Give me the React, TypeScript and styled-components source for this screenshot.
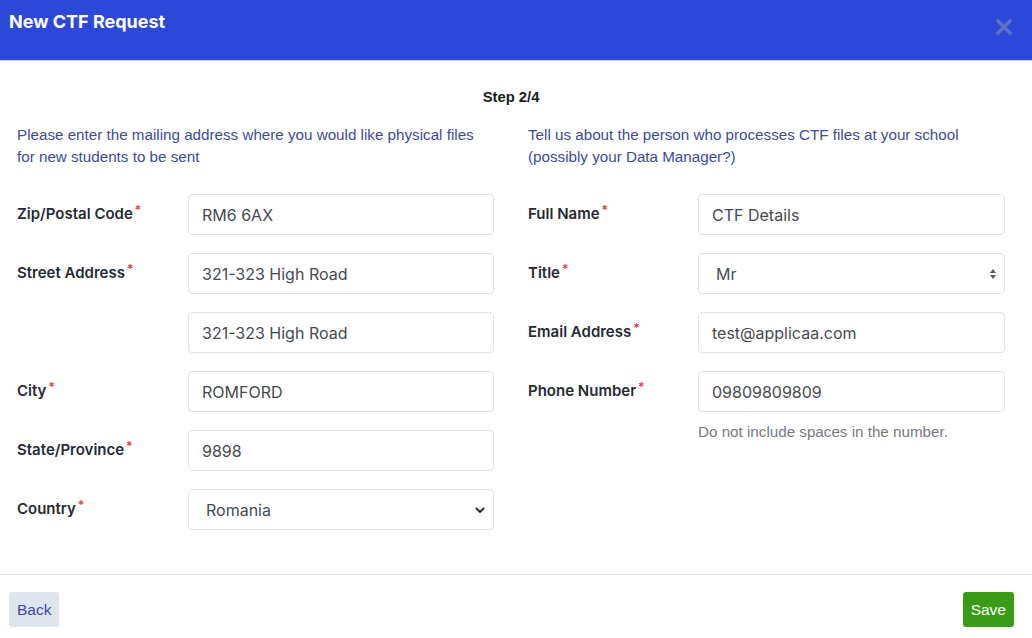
import React from 'react'
import styled, { createGlobalStyle } from 'styled-components'

const GlobalStyle = createGlobalStyle`
  html, body {
    margin: 0;
    padding: 0;
    background: #ffffff;
  }
  * {
    box-sizing: border-box;
  }
`

const Modal = styled.div`
  width: 1032px;
  height: 638px;
  display: flex;
  flex-direction: column;
  background: #fff;
  font-family: Inter, 'Liberation Sans', sans-serif;
`

const Header = styled.div`
  height: 61px;
  background: #2c48d8;
  border-bottom: 1px solid #c9d3ee;
  display: flex;
  align-items: flex-start;
  justify-content: space-between;
  padding: 11px 18px 0 9px;
`

const Title = styled.h1`
  margin: 0;
  color: #fff;
  font-size: 18px;
  font-weight: 700;
`

const CloseButton = styled.button`
  border: none;
  background: none;
  padding: 0;
  margin-top: 7px;
  width: 20px;
  height: 20px;
  cursor: pointer;
`

const Body = styled.div`
  flex: 1;
  padding: 28px 27px 0 17px;
`

const Step = styled.div`
  text-align: center;
  font-family: 'Liberation Sans', Arial, sans-serif;
  font-weight: 700;
  font-size: 14.8px;
  color: #1c1c1c;
  margin-bottom: 19px;
`

const Columns = styled.div`
  display: grid;
  grid-template-columns: 477px 477px;
  column-gap: 34px;
`

const Column = styled.div`
  display: flex;
  flex-direction: column;
`

const Intro = styled.p`
  margin: 0 0 26px;
  font-family: 'Liberation Sans', Arial, sans-serif;
  font-size: 15.2px;
  line-height: 22px;
  color: #3a4aa6;
`

const Row = styled.div<{ $labelWidth: number }>`
  display: grid;
  grid-template-columns: ${({ $labelWidth }) => $labelWidth}px 1fr;
  margin-bottom: 18px;
`

const Label = styled.label`
  font-size: 15px;
  font-weight: 600;
  color: #262a33;
  padding-top: 10px;
`

const Star = styled.span`
  color: #e8383d;
  font-size: 12px;
  vertical-align: top;
  margin-left: 2px;
  position: relative;
  top: -2px;
`

const Field = styled.div`
  display: flex;
  flex-direction: column;
  position: relative;
`

const Input = styled.input`
  width: 100%;
  height: 41px;
  border: 1px solid #dde3ea;
  border-radius: 4px;
  padding: 0 13px;
  font-family: Inter, 'Liberation Sans', sans-serif;
  font-size: 16px;
  color: #474a50;
  background: #fff;
  outline: none;
`

const Select = styled.select<{ $indent: number }>`
  width: 100%;
  height: 41px;
  border: 1px solid #dde3ea;
  border-radius: 4px;
  padding: 0 30px 0 ${({ $indent }) => $indent}px;
  font-family: Inter, 'Liberation Sans', sans-serif;
  font-size: 16px;
  color: #474a50;
  background: #fff;
  appearance: none;
  outline: none;
`

const Arrow = styled.span`
  position: absolute;
  right: 8px;
  top: 0;
  height: 41px;
  display: flex;
  align-items: center;
  pointer-events: none;
`

const Hint = styled.div`
  margin-top: 11px;
  font-family: 'Liberation Sans', Arial, sans-serif;
  font-size: 15.2px;
  color: #76797e;
`

const Footer = styled.div`
  height: 64px;
  border-top: 1px solid #dbe4ec;
  display: flex;
  justify-content: space-between;
  align-items: flex-start;
  padding: 17px 18px 0 9px;
`

const Button = styled.button<{ $variant: 'back' | 'save' }>`
  height: 35px;
  min-width: 50px;
  padding: 0 8px;
  border: none;
  border-radius: 3px;
  font-family: 'Liberation Sans', Arial, sans-serif;
  font-size: 15.5px;
  cursor: pointer;
  background: ${({ $variant }) => ($variant === 'save' ? '#3a9c16' : '#dfe5ee')};
  color: ${({ $variant }) => ($variant === 'save' ? '#ffffff' : '#3a4aa6')};
`

const Required = () => <Star>*</Star>

const ChevronDown = () => (
  <svg width="12" height="12" viewBox="0 0 12 12">
    <path d="M2.5 4.5 L6 8 L9.5 4.5" fill="none" stroke="#222" strokeWidth="1.8" strokeLinecap="round" strokeLinejoin="round" />
  </svg>
)

const UpDown = () => (
  <svg width="8" height="14" viewBox="0 0 8 14">
    <path d="M4 2 L7 6 L1 6 Z" fill="#555" />
    <path d="M4 12 L7 8 L1 8 Z" fill="#555" />
  </svg>
)

const leftRows = [
  { label: 'Zip/Postal Code', value: 'RM6 6AX', required: true },
  { label: 'Street Address', value: '321-323 High Road', required: true },
  { label: '', value: '321-323 High Road', required: false },
  { label: 'City', value: 'ROMFORD', required: true },
  { label: 'State/Province', value: '9898', required: true },
]

export default function App() {
  return (
    <Modal>
      <GlobalStyle />
      <Header>
        <Title>New CTF Request</Title>
        <CloseButton aria-label="Close">
          <svg width="18" height="18" viewBox="0 0 18 18">
            <path d="M3 3 L15 15 M15 3 L3 15" stroke="#5f72c4" strokeWidth="3.6" strokeLinecap="round" />
          </svg>
        </CloseButton>
      </Header>
      <Body>
        <Step>Step 2/4</Step>
        <Columns>
          <Column>
            <Intro>
              Please enter the mailing address where you would like physical files
              <br />
              for new students to be sent
            </Intro>
            {leftRows.map((r, i) => (
              <Row key={i} $labelWidth={171}>
                <Label>
                  {r.label}
                  {r.required && <Required />}
                </Label>
                <Field>
                  <Input defaultValue={r.value} />
                </Field>
              </Row>
            ))}
            <Row $labelWidth={171}>
              <Label>
                Country
                <Required />
              </Label>
              <Field>
                <Select $indent={17} defaultValue="Romania">
                  <option>United Kingdom</option>
                  <option>Romania</option>
                </Select>
                <Arrow>
                  <ChevronDown />
                </Arrow>
              </Field>
            </Row>
          </Column>
          <Column>
            <Intro>
              Tell us about the person who processes CTF files at your school
              <br />
              (possibly your Data Manager?)
            </Intro>
            <Row $labelWidth={170}>
              <Label>
                Full Name
                <Required />
              </Label>
              <Field>
                <Input defaultValue="CTF Details" />
              </Field>
            </Row>
            <Row $labelWidth={170}>
              <Label>
                Title
                <Required />
              </Label>
              <Field>
                <Select $indent={17} defaultValue="Mr">
                  <option>Mr</option>
                  <option>Mrs</option>
                  <option>Ms</option>
                </Select>
                <Arrow>
                  <UpDown />
                </Arrow>
              </Field>
            </Row>
            <Row $labelWidth={170}>
              <Label>
                Email Address
                <Required />
              </Label>
              <Field>
                <Input defaultValue="test@applicaa.com" />
              </Field>
            </Row>
            <Row $labelWidth={170}>
              <Label>
                Phone Number
                <Required />
              </Label>
              <Field>
                <Input defaultValue="09809809809" />
                <Hint>Do not include spaces in the number.</Hint>
              </Field>
            </Row>
          </Column>
        </Columns>
      </Body>
      <Footer>
        <Button $variant="back">Back</Button>
        <Button $variant="save">Save</Button>
      </Footer>
    </Modal>
  )
}
